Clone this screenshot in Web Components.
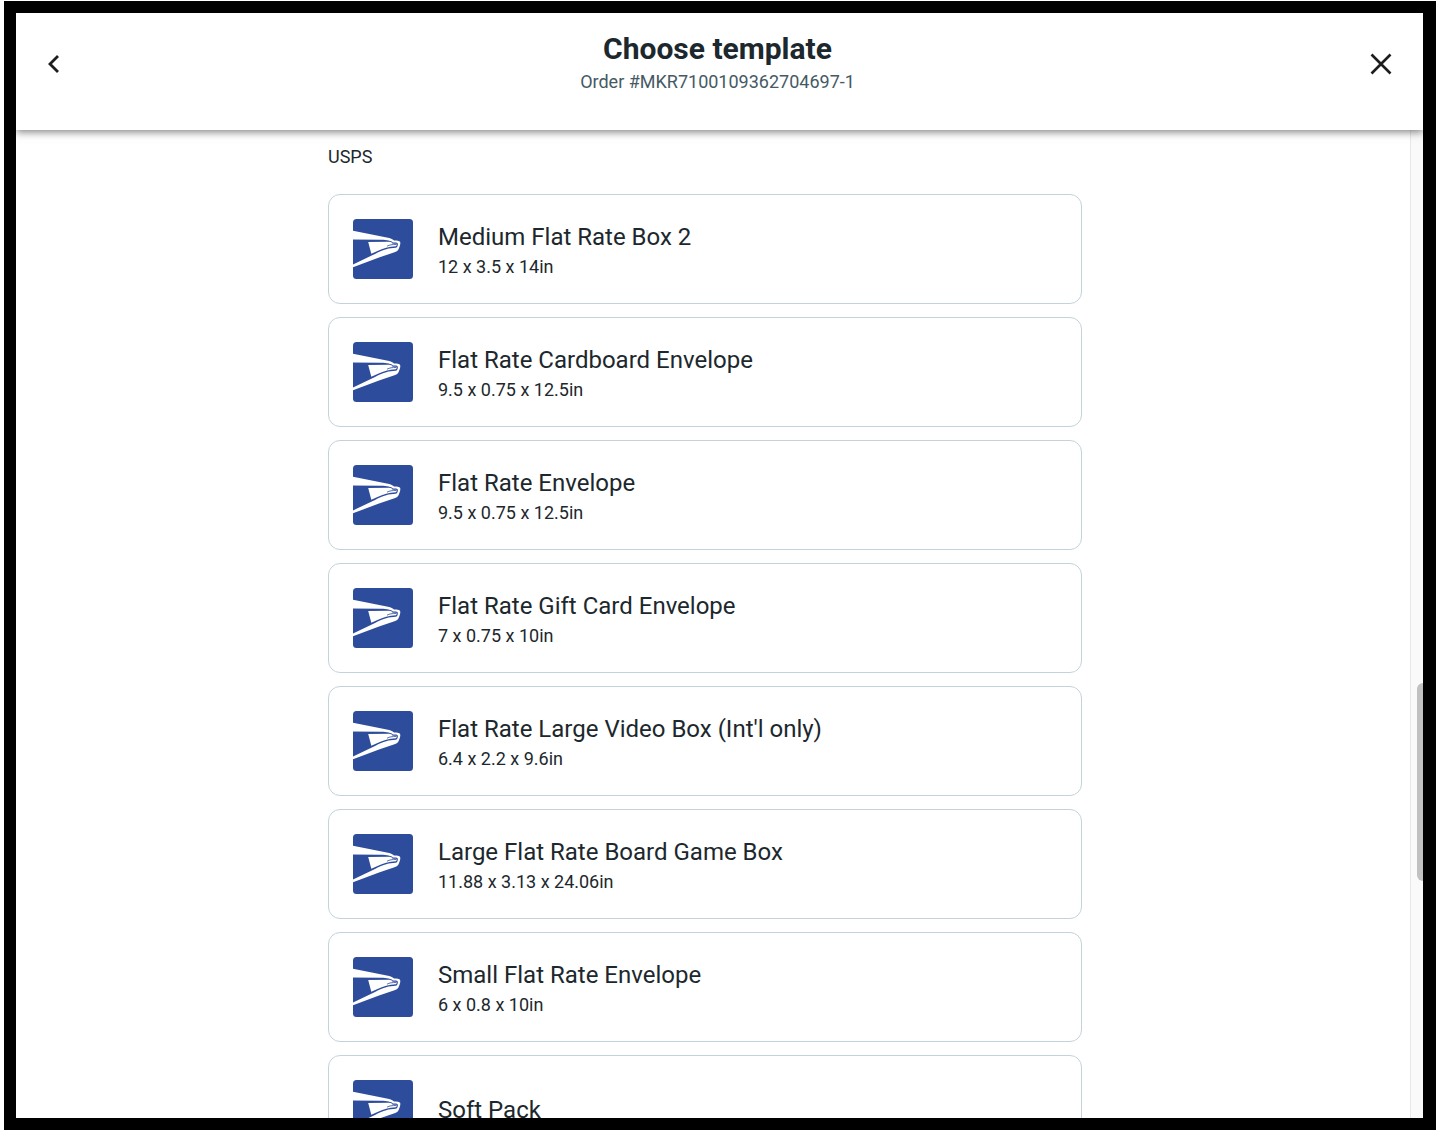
<!DOCTYPE html>
<html lang="en">
<head>
<meta charset="utf-8">
<meta name="viewport" content="width=device-width, initial-scale=1">
<title>Choose template</title>
<style>
  html, body {
    height: 100%;
    margin: 0;
  }

  body {
    box-sizing: border-box;
    padding: 1px 4px 2px;
    background: #fff;
    color: #1c282d;
    font-family: Roboto, "Liberation Sans", sans-serif;
    overflow: hidden;
  }
</style>
</head>
<body>
<template-dialog>
  <dialog-header slot="header" order="MKR7100109362704697-1">Choose template</dialog-header>
  <carrier-group name="USPS">
    <template-card size="12 x 3.5 x 14in">Medium Flat Rate Box 2</template-card>
    <template-card size="9.5 x 0.75 x 12.5in">Flat Rate Cardboard Envelope</template-card>
    <template-card size="9.5 x 0.75 x 12.5in">Flat Rate Envelope</template-card>
    <template-card size="7 x 0.75 x 10in">Flat Rate Gift Card Envelope</template-card>
    <template-card size="6.4 x 2.2 x 9.6in">Flat Rate Large Video Box (Int'l only)</template-card>
    <template-card size="11.88 x 3.13 x 24.06in">Large Flat Rate Board Game Box</template-card>
    <template-card size="6 x 0.8 x 10in">Small Flat Rate Envelope</template-card>
    <template-card>Soft Pack</template-card>
  </carrier-group>
</template-dialog>

<script>
class TemplateDialog extends HTMLElement {

    constructor() {
        super();
        this.attachShadow({mode: "open"});
    }

    connectedCallback() {
        this.shadowRoot.innerHTML = `
        <style>
        :host {
            display: flex;
            flex-direction: column;
            box-sizing: border-box;
            height: 100%;
            border: 12px solid #000;
            border-right-width: 13px;
            background: #fff;
            overflow: hidden;
        }

        .body {
            flex: 1;
            min-height: 0;
            display: flex;
        }

        .list {
            flex: 1;
            min-width: 0;
            padding: 15px 32px 0 16px;
            overflow: hidden;
        }

        .track {
            display: grid;
            grid-template-rows: 56fr 20fr 24fr;
            box-sizing: border-box;
            width: 13px;
            padding-left: 6px;
            border-left: 1px solid #e8e8e8;
            background: #fafafa;
        }

        .thumb {
            grid-row: 2;
            border-radius: 6px 0 0 6px;
            background: #c1c1c1;
        }
        </style>
        <slot name="header"></slot>
        <div class="body">
            <main class="list"><slot></slot></main>
            <div class="track"><div class="thumb"></div></div>
        </div>`;
    }
}

class DialogHeader extends HTMLElement {

    constructor() {
        super();
        this.attachShadow({mode: "open"});
    }

    connectedCallback() {
        this.shadowRoot.innerHTML = `
        <style>
        :host {
            display: grid;
            grid-template-columns: 52px 1fr 56px;
            position: relative;
            z-index: 1;
            box-sizing: border-box;
            height: 117px;
            padding: 16px;
            background: #fff;
            box-shadow: 0 2px 8px rgba(0, 0, 0, 0.5);
        }

        button {
            display: grid;
            place-items: center;
            width: 44px;
            height: 70px;
            padding: 0;
            border: 0;
            background: none;
            color: #1d1d1d;
            cursor: pointer;
        }

        .close {
            justify-self: end;
            width: 52px;
        }

        .titles {
            text-align: center;
        }

        h1 {
            margin: 0;
            font-size: 30px;
            line-height: 40px;
            font-weight: 700;
        }

        p {
            margin: 0;
            font-size: 18px;
            line-height: 26px;
            color: #455a64;
        }
        </style>
        <button type="button" aria-label="Back">
            <svg width="24" height="24" viewBox="0 0 24 24" fill="none" stroke="currentColor" stroke-width="2.8"><path d="M16 4 8 12l8 8"/></svg>
        </button>
        <div class="titles">
            <h1><slot></slot></h1>
            <p>Order #${this.getAttribute("order")}</p>
        </div>
        <button class="close" type="button" aria-label="Close">
            <svg width="24" height="24" viewBox="0 0 24 24" fill="none" stroke="currentColor" stroke-width="2.6"><path d="M2.5 2.5l19 19M21.5 2.5l-19 19"/></svg>
        </button>`;
    }
}

class CarrierGroup extends HTMLElement {

    constructor() {
        super();
        this.attachShadow({mode: "open"});
    }

    connectedCallback() {
        this.shadowRoot.innerHTML = `
        <style>
        :host {
            display: block;
            max-width: 754px;
            margin: 0 auto;
        }

        h2 {
            margin: 0 0 25px;
            font-size: 18px;
            line-height: 24px;
            font-weight: 400;
        }

        .cards {
            display: flex;
            flex-direction: column;
            gap: 13px;
        }
        </style>
        <h2>${this.getAttribute("name")}</h2>
        <div class="cards"><slot></slot></div>`;
    }
}

class TemplateCard extends HTMLElement {

    constructor() {
        super();
        this.attachShadow({mode: "open"});
    }

    connectedCallback() {
        const size = this.getAttribute("size");
        this.shadowRoot.innerHTML = `
        <style>
        :host {
            display: block;
        }

        button {
            display: flex;
            align-items: center;
            gap: 25px;
            box-sizing: border-box;
            width: 100%;
            padding: 24px;
            border: 1px solid #c3d3da;
            border-radius: 12px;
            background: #fff;
            color: inherit;
            font: inherit;
            text-align: left;
            cursor: pointer;
        }

        .text {
            display: flex;
            flex-direction: column;
        }

        .name {
            font-size: 24px;
            line-height: 36px;
        }

        .size {
            font-size: 18px;
            line-height: 24px;
        }
        </style>
        <button type="button">
            <usps-logo></usps-logo>
            <span class="text">
                <span class="name"><slot></slot></span>
                ${size ? `<span class="size">${size}</span>` : ""}
            </span>
        </button>`;
    }
}

class UspsLogo extends HTMLElement {

    constructor() {
        super();
        this.attachShadow({mode: "open"});
    }

    connectedCallback() {
        this.shadowRoot.innerHTML = `
        <style>
        :host {
            display: block;
            flex: none;
        }

        svg {
            display: block;
        }
        </style>
        <svg width="60" height="60" viewBox="0 0 60 60" aria-hidden="true">
            <rect width="60" height="60" rx="3.5" fill="#2e4c9c"/>
            <path fill="#fff" d="M0 11.8 35 18.8C38 19.5 40 20.5 41 21.4 44 21.4 46.4 21.6 47.1 22.8 47.8 24.2 46.8 27.9 45.4 30.4 44.5 32 43.2 32.6 41.5 33.2L26 38.6 0 48.2V45.4L22 34.9C31 30.2 36 29 42.6 28.7 44 28.7 44.5 27.5 44.8 26 45.1 24.4 44.4 23.7 43 23.6L39.8 23.4C38.4 21.7 34 20.9 28 20.7L0 20.4Z"/>
            <path fill="#fff" d="M15.2 23.1 36 22.7C38 22.7 39.2 23.5 39.6 24.8L43.4 24.8C43.9 24.8 43.8 27.1 42.9 27.2 36 27.4 30 29.2 24.5 32.1L18.3 34.7Z"/>
            <path fill="none" stroke="#2e4c9c" stroke-width=".8" d="M34 27.2C36.5 25.8 39 25.5 43.4 25.5"/>
        </svg>`;
    }
}

customElements.define("template-dialog", TemplateDialog);
customElements.define("dialog-header", DialogHeader);
customElements.define("carrier-group", CarrierGroup);
customElements.define("template-card", TemplateCard);
customElements.define("usps-logo", UspsLogo);
</script>
</body>
</html>
